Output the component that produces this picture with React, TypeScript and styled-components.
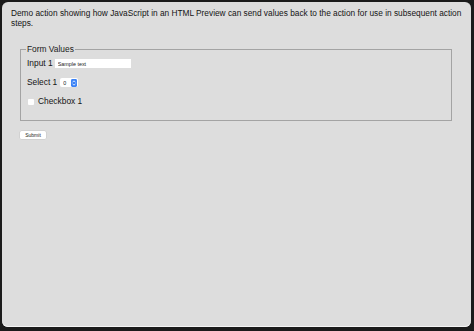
import styled, { createGlobalStyle } from 'styled-components';

const GlobalStyle = createGlobalStyle`
    html, body {
        margin: 0;
        padding: 0;
        background: #1b1b1b;
    }
    body {
        font-family: "Liberation Sans", Arial, sans-serif;
    }
`;

export default function App() {
    return (
        <>
            <GlobalStyle />
            <Window>
                <Description>
                    Demo action showing how JavaScript in an HTML Preview can send values back to the action for use in subsequent action steps.
                </Description>
                <FormBox>
                    <Legend>Form Values</Legend>
                    <Row gap={2}>
                        <Label>Input 1</Label>
                        <TextInput defaultValue="Sample text" />
                    </Row>
                    <Row gap={3}>
                        <Label>Select 1</Label>
                        <SelectWrap>
                            <Select defaultValue="0">
                                <option value="0">0</option>
                                <option value="1">1</option>
                                <option value="2">2</option>
                            </Select>
                            <Stepper viewBox="0 0 6 8" aria-hidden="true">
                                <rect width="6" height="8" rx="1.4" fill="#3a82f6" />
                                <path d="M1.7 3.1 L3 1.8 L4.3 3.1" fill="none" stroke="#fff" strokeWidth="0.8" strokeLinecap="round" strokeLinejoin="round" />
                                <path d="M1.7 4.9 L3 6.2 L4.3 4.9" fill="none" stroke="#fff" strokeWidth="0.8" strokeLinecap="round" strokeLinejoin="round" />
                            </Stepper>
                        </SelectWrap>
                    </Row>
                    <Row gap={4}>
                        <Checkbox type="checkbox" />
                        <Label>Checkbox 1</Label>
                    </Row>
                </FormBox>
                <SubmitButton type="button">Submit</SubmitButton>
            </Window>
        </>
    );
}

const Window = styled.div`
    box-sizing: border-box;
    margin: 2px 3px 0 2px;
    height: 325px;
    padding: 7px 4px 7px 9px;
    background: #dddddd;
    border-radius: 6px;
    box-shadow: inset 0 -1px 0 #f4f4f4;
    color: #1e1e1e;
`;

const Description = styled.p`
    margin: 0;
    font-size: 8.3px;
    line-height: 9.8px;
    color: #141414;
`;

const FormBox = styled.fieldset`
    margin: 16px 15px 0 9px;
    padding: 4px 6px 13px 6px;
    border: 1px solid #a3a3a3;
    display: flex;
    flex-direction: column;
    gap: 8px;
`;

const Legend = styled.legend`
    padding: 0 1px;
    margin-left: -1px;
    font-size: 8.4px;
    line-height: 9.4px;
    color: #1a1a1a;
`;

const Row = styled.div<{ gap: number }>`
    display: flex;
    align-items: center;
    gap: ${({ gap }) => gap}px;
    height: 11px;
`;

const Label = styled.span`
    font-size: 8.4px;
    line-height: 11px;
    color: #141414;
`;

const TextInput = styled.input`
    box-sizing: border-box;
    width: 76px;
    height: 9px;
    padding: 0 3px;
    border: none;
    outline: none;
    background: #ffffff;
    font-family: "Liberation Sans", Arial, sans-serif;
    font-size: 5.4px;
    color: #222;
`;

const SelectWrap = styled.span`
    position: relative;
    display: inline-flex;
    width: 18px;
    height: 9px;
`;

const Select = styled.select`
    appearance: none;
    box-sizing: border-box;
    width: 18px;
    height: 9px;
    padding: 0 0 0 3px;
    border: none;
    border-radius: 2px;
    background: #ffffff;
    font-family: "Liberation Sans", Arial, sans-serif;
    font-size: 5.4px;
    color: #222;
    outline: none;
`;

const Stepper = styled.svg`
    position: absolute;
    right: 1px;
    top: 0.5px;
    width: 6px;
    height: 8px;
    pointer-events: none;
`;

const Checkbox = styled.input`
    appearance: none;
    box-sizing: border-box;
    width: 6px;
    height: 6px;
    margin: 0 0 0 1px;
    border: none;
    border-radius: 1px;
    background: #ffffff;
`;

const SubmitButton = styled.button`
    box-sizing: border-box;
    margin: 10px 0 0 9px;
    width: 26px;
    height: 8px;
    padding: 0;
    border: none;
    border-radius: 1.5px;
    background: #ffffff;
    box-shadow: 0 0 0 0.5px #c8c8c8;
    font-family: "Liberation Sans", Arial, sans-serif;
    font-size: 5px;
    line-height: 8px;
    color: #222;
`;
